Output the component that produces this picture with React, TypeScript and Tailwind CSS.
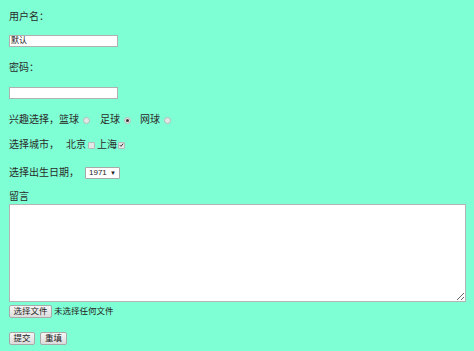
import React from 'react';

const font = { fontFamily: '"Liberation Sans", "Noto Sans CJK SC", sans-serif' };

function Radio({ checked = false }: { checked?: boolean }) {
  return (
    <span className="inline-flex items-center justify-center w-[7px] h-[7px] rounded-full border border-[#b4bcba] bg-[#e2e6e5] align-middle">
      {checked && <span className="w-[3px] h-[3px] rounded-full bg-[#333]" />}
    </span>
  );
}

function Check({ checked = false }: { checked?: boolean }) {
  return (
    <span className="inline-flex items-center justify-center w-[7px] h-[7px] rounded-[1px] border border-[#b4bcba] bg-[#e2e6e5] align-middle">
      {checked && (
        <svg width="6" height="6" viewBox="0 0 6 6">
          <path d="M1 3.2 L2.4 4.6 L5 1.4" stroke="#333" strokeWidth="1.2" fill="none" />
        </svg>
      )}
    </span>
  );
}

function Btn({ children, className = '' }: { children: React.ReactNode; className?: string }) {
  return (
    <span
      className={`inline-flex items-center justify-center h-[13px] border border-[#a9a9a9] rounded-[2px] bg-gradient-to-b from-[#f6f6f6] to-[#dcdcdc] text-[8.5px] leading-none text-[#222] ${className}`}
    >
      {children}
    </span>
  );
}

export default function App() {
  return (
    <div
      className="w-[474px] h-[351px] bg-[#7fffd4] pl-[9px] text-[10px] leading-[12px] text-[#2a2a2a] overflow-hidden"
      style={font}
    >
      <div className="mt-[10px] h-[12px] pt-px">用户名：</div>

      <div className="mt-[13px] w-[109px] h-[12px] bg-white border border-[#b0b0b0] flex items-center px-[1px] text-[8px] leading-none text-[#111]">
        默认
      </div>

      <div className="mt-[15px] h-[12px]">密码：</div>

      <div className="mt-[13px] w-[109px] h-[12px] bg-white border border-[#b0b0b0]" />

      <div className="mt-[15px] h-[12px] flex items-center">
        <span>兴趣选择，篮球</span>
        <span className="ml-[4px] mr-[10px] flex"><Radio /></span>
        <span>足球</span>
        <span className="ml-[4px] mr-[9px] flex"><Radio checked /></span>
        <span>网球</span>
        <span className="ml-[4px] flex"><Radio /></span>
      </div>

      <div className="mt-[13px] h-[12px] flex items-center">
        <span>选择城市，</span>
        <span className="ml-[7px]">北京</span>
        <span className="ml-[2px] mr-[2px] flex"><Check /></span>
        <span>上海</span>
        <span className="ml-[1px] flex"><Check checked /></span>
      </div>

      <div className="mt-[16px] h-[12px] flex items-center">
        <span>选择出生日期，</span>
        <span className="ml-[6px] w-[35px] h-[12px] bg-white border border-[#a8a8a8] rounded-[1px] flex items-center justify-between px-[3px] text-[8px] leading-none text-[#222]">
          <span>1971</span>
          <span className="text-[6px]">▼</span>
        </span>
      </div>

      <div className="mt-[12px] h-[12px]">留言</div>

      <textarea
        className="mt-[1px] block w-[457px] h-[98px] bg-white border border-[#b4b4b4] outline-none"
        defaultValue=""
      />

      <div className="mt-[3px] h-[13px] flex items-center">
        <Btn className="w-[43px]">选择文件</Btn>
        <span className="ml-[2px] text-[8.5px] leading-none text-[#222]">未选择任何文件</span>
      </div>

      <div className="mt-[14px] h-[13px] flex items-center gap-[5px]">
        <Btn className="w-[26px]">提交</Btn>
        <Btn className="w-[27px]">重填</Btn>
      </div>
    </div>
  );
}
